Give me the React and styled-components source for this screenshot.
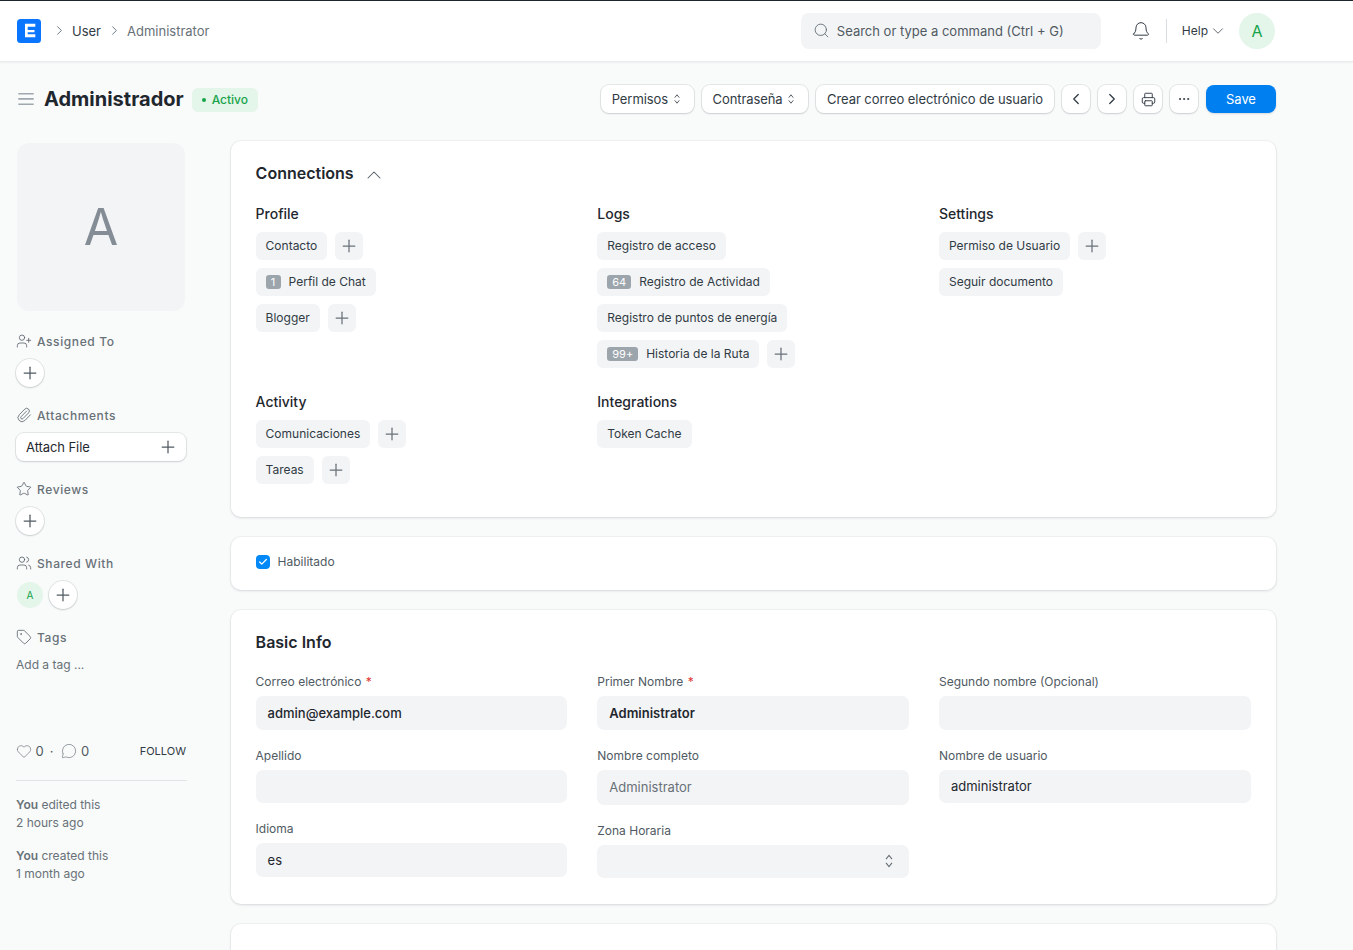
import React from 'react';
import styled, { createGlobalStyle } from 'styled-components';
import { Search, Bell, ChevronDown, ChevronUp, ChevronLeft, ChevronRight, Printer, Ellipsis, Plus, UserPlus, Paperclip, Star, Users, Tag, Heart, MessageCircle, Check } from 'lucide-react';

const Global = createGlobalStyle`
  html, body { margin: 0; padding: 0; height: 950px; overflow: hidden; background: #f9fafa; }
  body { font-family: Inter, "Noto Sans", sans-serif; color: #1f272e; font-size: 13px; }
  * { box-sizing: border-box; }
`;

const Navbar = styled.header`
  height: 62px; background: #fff; border-top: 1px solid #1f272e; border-bottom: 1px solid #e8eaec;
  box-shadow: 0 1px 2px rgba(25,39,52,.05);
  display: flex; align-items: center; padding: 0 78px 1px 17px;
`;
const Logo = styled.svg`width: 24px; height: 24px; flex: none; margin-right: 10.5px;`;
const Crumb = styled.span`
  font-size: 13px; color: ${p => p.$muted ? '#687178' : '#313b44'}; margin: 0 5.5px;
  line-height: 20px;
`;
const Sep = styled(ChevronRight)`width: 15px; height: 15px; color: #4c5a67; stroke-width: 1.3; flex: none;`;
const Spacer = styled.div`flex: 1;`;
const SearchBox = styled.div`
  width: 300px; height: 36px; background: #f3f4f6; border-radius: 8px; display: flex; align-items: center; padding-left: 12px; gap: 7px;
  color: #505a62; font-size: 13px;
`;
const BellIcon = styled(Bell)`width: 20px; height: 20px; color: #313b44; stroke-width: 1.2; margin-left: 30px; flex: none;`;
const Divider = styled.div`width: 1px; height: 24px; background: #d8dde2; margin: 0 15px 0 15px;`;
const Help = styled.div`display: flex; align-items: center; gap: 1px; font-size: 12px; color: #313b44; margin-right: 12px;`;
const Avatar = styled.div`
  width: ${p => p.$size}px; height: ${p => p.$size}px; border-radius: 50%; background: #e4f5e9; color: #16a34a;
  display: flex; align-items: center; justify-content: center; font-size: ${p => p.$font}px; flex: none;
`;

const PageHead = styled.div`
  display: flex; align-items: center; height: 30px; margin: 22px 77px 0 16px;
`;
const Burger = styled.svg`width: 20px; height: 20px; flex: none; margin-right: 8px; color: #a0a7ae;`;
const Title = styled.h1`margin: 0; font-size: 20px; line-height: 28px; font-weight: 700; color: #1f272e;`;
const Badge = styled.span`
  margin: 2px 0 0 8px; height: 24px; background: #e4f5e9; border-radius: 6px; display: flex; align-items: center; gap: 6px;
  padding: 0 10px 1px; color: #16a34a; font-size: 12px; font-weight: 500;
  &::before { content: ''; width: 4px; height: 4px; border-radius: 50%; background: #16a34a; }
`;
const Actions = styled.div`margin-left: auto; display: flex; gap: 8px; align-items: center;`;
const Btn = styled.button`
  height: 28px; padding: 0 ${p => p.$pad ?? 11}px; background: #fff; border: 0; border-radius: 8px; font: inherit; font-size: 13px; letter-spacing: -.08px;
  color: #313b44; display: flex; align-items: center; justify-content: center; gap: 2.5px; width: ${p => p.$w ? p.$w + 'px' : 'auto'};
  box-shadow: 0 0 0 1px rgba(25,39,52,.09), 0 1px 2px rgba(25,39,52,.12);
`;
const SaveBtn = styled(Btn)`background: #0080f0; color: #fff; width: 70px; box-shadow: 0 1px 2px rgba(25,39,52,.15);`;
const Caret = styled.svg`
  width: ${p => p.$size}px; height: ${p => p.$size}px; flex: none; fill: none; stroke: ${p => p.$color}; stroke-width: 1.1;
`;

const Layout = styled.div`
  display: grid; grid-template-columns: 170px 1045px; column-gap: 45px; margin: 0 0 0 16px; padding-top: 27px;
`;
const Sidebar = styled.aside`display: flex; flex-direction: column; padding-top: 2px;`;
const Portrait = styled.div`
  margin-left: 1px; width: 168px; height: 168px; background: #f3f4f6; border-radius: 12px; display: flex; align-items: center; justify-content: center;
  color: #848d95; font-size: 50px; margin-bottom: 22px;
`;
const SideSection = styled.section`margin-bottom: ${p => p.$mb ?? 20}px;`;
const SideLabel = styled.div`
  display: flex; align-items: center; gap: 5px; height: 16px; color: #687178; font-size: 12px; font-weight: 500; letter-spacing: .05em; margin-bottom: ${p => p.$mb ?? 10}px;
  svg { width: 16px; height: 16px; stroke-width: 1.15; color: #505a62; flex: none; }
`;
const Round = styled.button`
  width: 28px; height: 28px; border-radius: 50%; border: 0; background: #fff; padding: 0; display: flex; align-items: center; justify-content: center; color: #505a62;
  box-shadow: 0 0 0 1px rgba(25,39,52,.09), 0 1px 2px rgba(25,39,52,.14);
  svg { width: 20px; height: 20px; stroke-width: 1.5; }
`;
const Row = styled.div`display: flex; align-items: center; gap: ${p => p.$gap ?? 6}px;`;
const AttachBtn = styled(Btn)`width: 170px; height: 28px; justify-content: space-between; padding: 0 8px 0 10px; color: #1f272e;
  svg { width: 20px; height: 20px; stroke-width: 1.5; color: #505a62; }`;
const AddTag = styled.div`color: #687178; font-size: 12px; line-height: 16px;`;
const Stats = styled.div`
  display: flex; align-items: center; height: 20px; margin-top: 68px; color: #505a62; font-size: 13px;
  svg { width: 16px; height: 16px; stroke-width: 1; color: #687178; margin-right: 3.5px; }
`;
const Dot = styled.span`margin: 0 8px 0 6px;`;
const Follow = styled.span`margin-left: auto; font-size: 11px; color: #313b44;`;
const Rule = styled.hr`border: 0; border-top: 1px solid #e2e5e8; margin: 19px 0 15px; width: 171px;`;
const Log = styled.div`font-size: 12px; line-height: 18px; color: #687178; margin-bottom: 15px; b { font-weight: 600; }`;

const Main = styled.main`display: flex; flex-direction: column; gap: 20px;`;
const Card = styled.section`
  background: #fff; border-radius: 10px; padding: ${p => p.$pad}; height: ${p => p.$h}px;
  box-shadow: 0 0 0 1px rgba(25,39,52,.03), 0 1px 3px rgba(25,39,52,.12);
`;
const CardTitle = styled.h2`
  margin: 0; height: 24px; font-size: 16px; line-height: 24px; font-weight: 600; color: #1f272e; display: flex; align-items: center; gap: 8.5px;
  svg { width: 24px; height: 24px; stroke-width: 1.05; color: #505a62; margin-top: 3px; flex: none; }
`;
const ThreeCols = styled.div`
  display: grid; grid-template-columns: repeat(3, 311.7px); column-gap: 30px;
`;
const LinkCols = styled(ThreeCols)`margin-top: 19px;`;
const Group = styled.div`margin-bottom: ${p => p.$mb ?? 0}px;`;
const GroupTitle = styled.h3`margin: 0 0 8px; font-size: 14px; line-height: 20px; font-weight: 500; color: #1f272e;`;
const Links = styled.div`display: flex; flex-direction: column; gap: 8px; align-items: flex-start;`;
const Pill = styled.div`
  height: 28px; background: #f3f4f6; border-radius: 6px; padding: 0 10px 1px; display: flex; align-items: center; gap: 8px; font-size: 12px; color: #313b44;
`;
const Count = styled.span`
  background: #98a1a9; color: #fff; border-radius: 3px; height: 14px; min-width: 15px; padding: 0 5px; display: flex; align-items: center; justify-content: center; font-size: 11px; opacity: .95;
`;
const PlusPill = styled.button`
  width: 28px; height: 28px; background: #f3f4f6; border: 0; border-radius: 6px; padding: 0; display: flex; align-items: center; justify-content: center; color: #687178;
  svg { width: 20px; height: 20px; stroke-width: 1.5; }
`;
const CheckRow = styled.label`display: flex; align-items: center; gap: 8px; font-size: 12px; color: #505a62; height: 14px;`;
const CheckText = styled.span`margin-bottom: 2px;`;
const Box = styled.span`
  width: 14px; height: 14px; border-radius: 4px; background: #0289f7; display: flex; align-items: center; justify-content: center; color: #fff;
  svg { width: 10px; height: 10px; stroke-width: 3; }
`;
const FormCols = styled(ThreeCols)`margin-top: 20px;`;
const Col = styled.div`display: flex; flex-direction: column;`;
const FieldLabel = styled.label`
  display: block; font-size: 12px; line-height: 16px; color: #505a62; margin-top: ${p => p.$mt ?? 0}px; margin-bottom: ${p => p.$mb ?? 6}px;
  i { color: #e03636; font-style: normal; margin-left: 1px; }
`;
const Input = styled.div`
  height: ${p => p.$h ?? 34}px; background: #f3f4f6; border-radius: 7px; padding: 0 12px ${p => p.$h ? 1 : 0}px; display: flex; align-items: center;
  font-size: 13px; font-weight: ${p => p.$w ?? 400}; color: ${p => p.$muted ? '#687178' : '#1f272e'};
`;
const SelectInput = styled(Input)`justify-content: flex-end;`;
const OffsetAvatar = styled(Avatar)`margin-left: 1px;`;

function PlusIcon() { return <Plus />; }

function UpDown({ size = 12, color = '#313b44' }) {
  return (
    <Caret $size={size} $color={color} viewBox="0 0 16 16">
      <path d="M5 6.2l3-3.8 3 3.8M5 9.8l3 3.8 3-3.8" />
    </Caret>
  );
}

function LinkRow({ label, count, add }) {
  return (
    <Row $gap={8}>
      <Pill>{count && <Count>{count}</Count>}{label}</Pill>
      {add && <PlusPill><PlusIcon /></PlusPill>}
    </Row>
  );
}

function LinkGroup({ title, items, mb }) {
  return (
    <Group $mb={mb}>
      <GroupTitle>{title}</GroupTitle>
      <Links>{items.map(i => <LinkRow key={i.label} {...i} />)}</Links>
    </Group>
  );
}

export default function App() {
  return (
    <>
      <Global />
      <Navbar>
        <Logo viewBox="0 0 24 24">
          <rect width="24" height="24" rx="3.5" fill="#0a75ff" />
          <path d="M8 4.7h10.3v3H10.7V11h6.8v2.3h-6.8v2h7.6v3H8z" fill="#fff" />
        </Logo>
        <Sep /><Crumb>User</Crumb>
        <Sep /><Crumb $muted>Administrator</Crumb>
        <Spacer />
        <SearchBox><Search size={17} strokeWidth={1.1} />Search or type a command (Ctrl + G)</SearchBox>
        <BellIcon />
        <Divider />
        <Help>Help <ChevronDown size={18} strokeWidth={1} /></Help>
        <Avatar $size={36} $font={16}>A</Avatar>
      </Navbar>

      <PageHead>
        <Burger viewBox="0 0 20 20"><path d="M2.3 4.7h15.4M2.3 9.9h15.4M2.3 15.2h15.4" stroke="currentColor" strokeWidth="1.6" fill="none" /></Burger>
        <Title>Administrador</Title>
        <Badge>Activo</Badge>
        <Actions>
          <Btn>Permisos <UpDown /></Btn>
          <Btn>Contraseña <UpDown /></Btn>
          <Btn>Crear correo electrónico de usuario</Btn>
          <Btn $w={28} $pad={0}><ChevronLeft size={18} strokeWidth={1.7} /></Btn>
          <Btn $w={28} $pad={0}><ChevronRight size={18} strokeWidth={1.7} /></Btn>
          <Btn $w={28} $pad={0}><Printer size={15} strokeWidth={1.5} /></Btn>
          <Btn $w={28} $pad={0}><Ellipsis size={14} strokeWidth={1.7} /></Btn>
          <SaveBtn>Save</SaveBtn>
        </Actions>
      </PageHead>

      <Layout>
        <Sidebar>
          <Portrait>A</Portrait>
          <SideSection>
            <SideLabel><UserPlus />Assigned To</SideLabel>
            <Round><PlusIcon /></Round>
          </SideSection>
          <SideSection>
            <SideLabel><Paperclip />Attachments</SideLabel>
            <AttachBtn>Attach File <PlusIcon /></AttachBtn>
          </SideSection>
          <SideSection>
            <SideLabel><Star />Reviews</SideLabel>
            <Round><PlusIcon /></Round>
          </SideSection>
          <SideSection>
            <SideLabel><Users />Shared With</SideLabel>
            <Row $gap={6}>
              <OffsetAvatar $size={26} $font={10}>A</OffsetAvatar>
              <Round><PlusIcon /></Round>
            </Row>
          </SideSection>
          <SideSection $mb={0}>
            <SideLabel $mb={12}><Tag />Tags</SideLabel>
            <AddTag>Add a tag ...</AddTag>
          </SideSection>
          <Stats><Heart />0<Dot>·</Dot><MessageCircle />0<Follow>FOLLOW</Follow></Stats>
          <Rule />
          <Log><b>You</b> edited this<br />2 hours ago</Log>
          <Log><b>You</b> created this<br />1 month ago</Log>
        </Sidebar>

        <Main>
          <Card $pad="20px 24.6px" $h={376}>
            <CardTitle>Connections <ChevronUp /></CardTitle>
            <LinkCols>
              <LinkGroup title="Profile" mb={24} items={[{ label: 'Contacto', add: true }, { label: 'Perfil de Chat', count: '1' }, { label: 'Blogger', add: true }]} />
              <LinkGroup title="Logs" mb={24} items={[{ label: 'Registro de acceso' }, { label: 'Registro de Actividad', count: '64' }, { label: 'Registro de puntos de energía' }, { label: 'Historia de la Ruta', count: '99+', add: true }]} />
              <LinkGroup title="Settings" mb={24} items={[{ label: 'Permiso de Usuario', add: true }, { label: 'Seguir documento' }]} />
              <LinkGroup title="Activity" items={[{ label: 'Comunicaciones', add: true }, { label: 'Tareas', add: true }]} />
              <LinkGroup title="Integrations" items={[{ label: 'Token Cache' }]} />
            </LinkCols>
          </Card>
          <Card $pad="18px 24.6px" $h={53}>
            <CheckRow><Box><Check /></Box><CheckText>Habilitado</CheckText></CheckRow>
          </Card>
          <Card $pad="20px 24.6px" $h={294}>
            <CardTitle>Basic Info</CardTitle>
            <FormCols>
              <Col>
                <FieldLabel>Correo electrónico <i>*</i></FieldLabel>
                <Input $w={500}>admin@example.com</Input>
                <FieldLabel $mt={18}>Apellido</FieldLabel>
                <Input $h={33} />
                <FieldLabel $mt={18}>Idioma</FieldLabel>
                <Input>es</Input>
              </Col>
              <Col>
                <FieldLabel>Primer Nombre <i>*</i></FieldLabel>
                <Input $w={600}>Administrator</Input>
                <FieldLabel $mt={18}>Nombre completo</FieldLabel>
                <Input $h={35} $muted>Administrator</Input>
                <FieldLabel $mt={18}>Zona Horaria</FieldLabel>
                <SelectInput $h={33}><UpDown size={16} color="#687178" /></SelectInput>
              </Col>
              <Col>
                <FieldLabel>Segundo nombre (Opcional)</FieldLabel>
                <Input />
                <FieldLabel $mt={18}>Nombre de usuario</FieldLabel>
                <Input $h={33}>administrator</Input>
              </Col>
            </FormCols>
          </Card>
          <Card $h={100} />
        </Main>
      </Layout>
    </>
  );
}
